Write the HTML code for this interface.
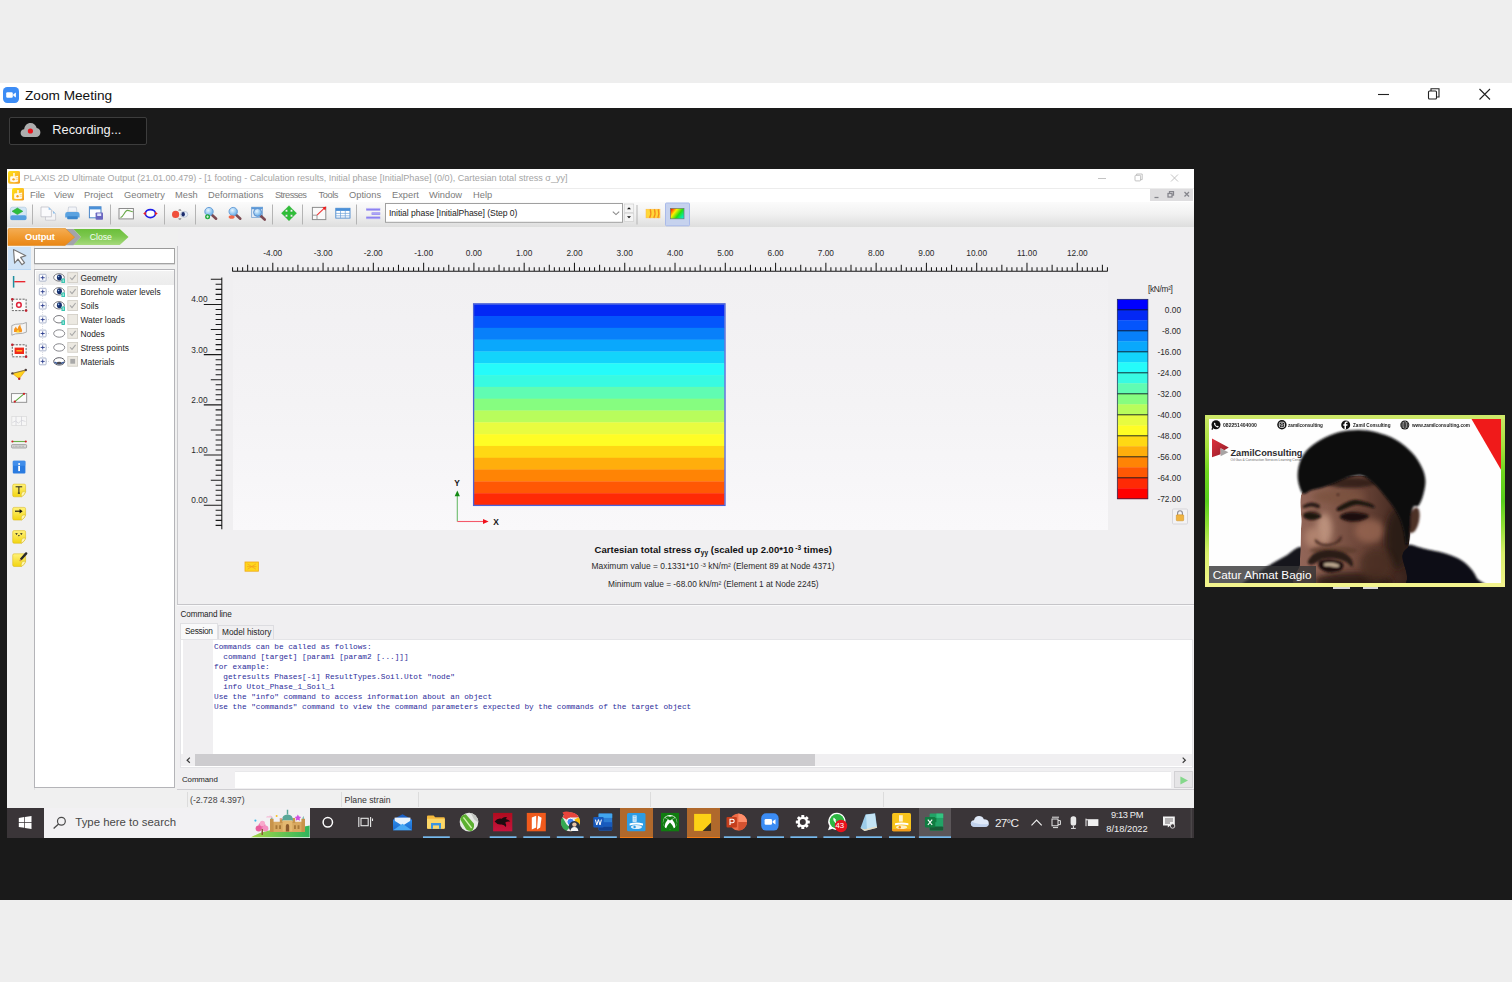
<!DOCTYPE html>
<html lang="en"><head><meta charset="utf-8"><title>Zoom Meeting</title>
<style>
html,body{margin:0;padding:0}
body{width:1512px;height:982px;background:#eeeeee;position:relative;overflow:hidden;font-family:"Liberation Sans",sans-serif;color:#000}
.a,.a *{position:absolute}
.a{position:absolute}
div,span,svg{box-sizing:border-box}
.t{white-space:nowrap;line-height:1}
#ztitle{left:0;top:83px;width:1512px;height:25.400px;background:#fff}
#dark{left:0;top:108.300px;width:1512px;height:791.700px;background:#1a1a1a}
#rec{left:9px;top:117px;width:138px;height:28px;background:#111;border:1px solid #3d3d3d;border-radius:2px}
#share{left:0;top:0;width:1512px;height:982px;clip-path:inset(169px 318px 144px 7px)}
#sharebg{left:7px;top:169px;width:1187px;height:669px;background:#f0f0f0}
.rl{font-size:8.300px;color:#2a2a2a}
</style></head><body>
<!-- Zoom window chrome -->
<div class="a" id="ztitle"></div>
<svg class="a" style="left:3px;top:87px" width="16" height="16" viewBox="0 0 16 16"><rect x="0" y="0" width="16" height="16" rx="4.2" fill="#3c8cf5"/><rect x="3.2" y="5.3" width="6.6" height="5.4" rx="1.2" fill="#fff"/><path d="M10.3 7.3 L12.9 5.6 V10.4 L10.3 8.7Z" fill="#fff"/></svg>
<div class="a t" style="left:25px;top:89.400px;font-size:13.650px;color:#111">Zoom Meeting</div>
<svg class="a" style="left:1370px;top:84px" width="130" height="22" viewBox="0 0 130 22" fill="none" stroke="#222" stroke-width="1.1"><path d="M8 10.5 H19"/><rect x="58.5" y="7" width="8" height="8" rx="1"/><path d="M61 7 V4.8 H69 V13 H66.5"/><path d="M109.5 5 L120 15.5 M120 5 L109.5 15.5"/></svg>
<div class="a" id="dark"></div>
<div class="a" id="rec"></div>
<svg class="a" style="left:20px;top:122px" width="21" height="16" viewBox="0 0 21 16"><path d="M5 15 C2 15 .6 13 .6 11 C.6 8.8 2.3 7.4 4.2 7.3 C4.4 3.6 7.2 1 10.5 1 C13.6 1 16 3 16.7 6 C19 6.3 20.4 8.2 20.4 10.4 C20.4 13 18.5 15 16 15Z" fill="#adadad"/><circle cx="10.4" cy="9" r="2.6" fill="#e8141c"/></svg>
<div class="a t" style="left:52.300px;top:123.900px;font-size:12.800px;color:#f2f2f2">Recording...</div>
<div class="a" id="share">
<div class="a" id="sharebg"></div>
<!-- PLAXIS title bar -->
<div class="a" style="left:7px;top:169px;width:1187px;height:18.5px;background:#fff"></div>
<svg class="a" style="left:7.900px;top:171.400px" width="12.300" height="12.700" preserveAspectRatio="none" viewBox="0 0 12 12"><defs><linearGradient id="pg" x1="0" y1="0" x2="1" y2="1"><stop offset="0" stop-color="#ffe414"/><stop offset=".55" stop-color="#fbbd24"/><stop offset="1" stop-color="#f39a1c"/></linearGradient></defs><rect width="12" height="12" rx="1.8" fill="url(#pg)"/><path d="M5.100 1.800h1.500v3.300l3.300-.700v5.600q-3.900 1.200-7.800 0v-3.700q0-1.300 1.300-1.300h1.700z" fill="#fff" opacity=".92"/><circle cx="5.400" cy="7.900" r="1.150" fill="#f6a21c"/><path d="M7.400 6.300h2.400M7.400 7.900h2.400" stroke="#f8b838" stroke-width=".5"/></svg>
<div class="a t" style="left:23.5px;top:174.100px;font-size:9.070px;color:#a4a4a4">PLAXIS 2D Ultimate Output (21.01.00.479) - [1 footing - Calculation results, Initial phase [InitialPhase] (0/0), Cartesian total stress σ_yy]</div>
<svg class="a" style="left:1090px;top:170px" width="100" height="16" viewBox="0 0 100 16" fill="none" stroke="#b4b4b4" stroke-width="0.8"><path d="M8 8.5h8"/><rect x="45" y="5.3" width="5.6" height="5.6" rx=".8"/><path d="M46.6 5.3V4h5.6v5.6h-1.6"/><path d="M81 4.5l7 7m0-7l-7 7"/></svg>
<!-- menu bar -->
<div class="a" style="left:7px;top:187.5px;width:1187px;height:14.5px;background:#fff;border-top:1px solid #ececec"></div>
<svg class="a" style="left:12px;top:188.100px" width="12.300" height="12.500" preserveAspectRatio="none" viewBox="0 0 12 12"><rect width="12" height="12" rx="1.8" fill="url(#pg)"/><path d="M5.100 1.800h1.500v3.300l3.300-.700v5.600q-3.900 1.200-7.800 0v-3.700q0-1.300 1.300-1.300h1.700z" fill="#fff" opacity=".92"/><circle cx="5.400" cy="7.900" r="1.150" fill="#f6a21c"/><path d="M7.400 6.300h2.400M7.400 7.900h2.400" stroke="#f8b838" stroke-width=".5"/></svg>
<div class="a t" id="menu" style="left:0;top:190.700px;font-size:9.300px;color:#7b7b7b">
<span style="left:30px">File</span><span style="left:54px">View</span><span style="left:84px">Project</span><span style="left:124px">Geometry</span><span style="left:175px">Mesh</span><span style="left:208px">Deformations</span><span style="left:275px;letter-spacing:-.6px">Stresses</span><span style="left:318.400px;letter-spacing:-.4px">Tools</span><span style="left:349px">Options</span><span style="left:392px">Expert</span><span style="left:429px">Window</span><span style="left:473px">Help</span></div>
<div class="a" style="left:1150.300px;top:188.500px;width:43px;height:12.600px;background:#dedddf"></div>
<svg class="a" style="left:1148px;top:188px" width="45" height="13" viewBox="0 0 45 13" fill="none" stroke="#85858c" stroke-width="1.250"><path d="M6.500 9.500h4"/><rect x="20" y="5.5" width="4" height="3.5"/><path d="M21.5 5.5V3.5h4v3.5h-1.5"/><path d="M36.5 4l4.5 4.5m0-4.5l-4.5 4.5"/></svg>
<!-- toolbar -->
<div class="a" style="left:7px;top:202px;width:1187px;height:25px;background:linear-gradient(#fbfbfb,#f2f2f2 45%,#dedede)"></div>
<!-- toolbar icons -->
<svg class="a" style="left:7px;top:202px" width="700" height="25" viewBox="7 202 700 25">
<defs>
<linearGradient id="bl" x1="0" y1="0" x2="0" y2="1"><stop offset="0" stop-color="#bcdcf4"/><stop offset="1" stop-color="#4c9cdc"/></linearGradient>
<linearGradient id="rb" x1="0" y1="0.2" x2="1" y2="0.8"><stop offset="0" stop-color="#ff1e00"/><stop offset=".3" stop-color="#fff000"/><stop offset=".62" stop-color="#22e010"/><stop offset="1" stop-color="#00f0d0"/></linearGradient>
<radialGradient id="lens" cx=".4" cy=".35" r=".7"><stop offset="0" stop-color="#e8f6ff"/><stop offset="1" stop-color="#5aa6e6"/></radialGradient>
</defs>
<g stroke="#b4b4b4" stroke-width="1"><path d="M32.5 204.5v20M110.5 204.5v20M164.5 204.5v20M195.5 204.5v20M272.5 204.5v20M302.5 204.5v20M356.5 204.5v20M637 205v19.5"/></g>
<!-- open -->
<rect x="10.400" y="207.200" width="16" height="12.800" rx="2" fill="#d4e6f5" stroke="#a9c6de" stroke-width=".6"/>
<rect x="10.400" y="215.300" width="16" height="4.700" rx="1.600" fill="#559fdf"/>
<path d="M17.400 208l5.400 3.300-5.400 3.300-5.400-3.300z" fill="#2cbe3c" stroke="#20a030" stroke-width=".5"/>
<!-- copy -->
<path d="M45.5 211h7.5l2.6 2.6v6.6h-10.1z" fill="#f4f4f6" stroke="#c2c2c8" stroke-width=".7"/>
<path d="M41 207h7.6l2.8 2.8v7h-10.4z" fill="#fafafc" stroke="#b8b8c0" stroke-width=".7"/>
<path d="M48.6 207l2.8 2.8h-2.8z" fill="#8fc2ee"/><path d="M53 211l2.6 2.6H53z" fill="#8fc2ee"/>
<!-- print -->
<path d="M68.6 207h7.6l.8 5h-9.2z" fill="#f2f4f8" stroke="#b8c0cc" stroke-width=".6"/>
<path d="M65.2 214.2q0-2.2 2.2-2.2h10q2.2 0 2.2 2.2v3.200h-14.400z" fill="#5aa2e0"/>
<rect x="67.200" y="216.200" width="10.600" height="3" rx=".8" fill="#3b86cc"/>
<!-- window + save -->
<rect x="89.400" y="206.800" width="11.600" height="11" fill="#fdfdff" stroke="#4a86c8" stroke-width="1"/>
<rect x="89.400" y="206.800" width="11.600" height="2.600" fill="#4a90d8"/>
<rect x="95.600" y="212.400" width="7.400" height="7.400" rx=".8" fill="#6a66c0"/>
<rect x="97.200" y="213.400" width="4" height="2.600" fill="#dfe2fa"/>
<!-- chart -->
<rect x="119" y="208.500" width="14.400" height="10.400" fill="#fcfcfc" stroke="#8c8c8c" stroke-width="1"/>
<path d="M120.500 217.600c3-.4 4-7 7-7.200 2-.1 3 1 5.200 1.200" fill="none" stroke="#6aa84a" stroke-width="1.100"/>
<!-- ellipse -->
<ellipse cx="150.400" cy="213.600" rx="5" ry="4" fill="#fff" stroke="#2020e8" stroke-width="1.700"/>
<path d="M143.200 213.600l2.600-2v4zM157.700 213.600l-2.600-2v4z" fill="#f02020"/>
<!-- ball+eye -->
<circle cx="175.600" cy="214.400" r="3.600" fill="#f0503c"/>
<path d="M178.600 210.200q1.600-.8 2.600 .2M178.600 218.800q1.600 .8 2.600-.2" stroke="#444" stroke-width=".8" fill="none"/>
<ellipse cx="184.200" cy="214.300" rx="3.600" ry="3" fill="#e4ecf8" stroke="#9aa4b8" stroke-width=".5"/>
<ellipse cx="183.200" cy="214.300" rx="1.700" ry="2.300" fill="#1c2c6c"/>
<!-- zoom in -->
<g id="mag"><path d="M211.500 214.500l4.600 4.200" stroke="#7c4a52" stroke-width="2.600" stroke-linecap="round"/><circle cx="209" cy="211.600" r="4.200" fill="url(#lens)" stroke="#6aa0d8" stroke-width="1"/></g>
<circle cx="207.600" cy="216.800" r="2.500" fill="#1ea83a"/><path d="M206.200 216.800h2.800M207.600 215.400v2.800" stroke="#fff" stroke-width=".7"/>
<!-- zoom out -->
<g transform="translate(24.200 0)"><path d="M211.500 214.500l4.600 4.200" stroke="#7c4a52" stroke-width="2.600" stroke-linecap="round"/><circle cx="209" cy="211.600" r="4.200" fill="url(#lens)" stroke="#6aa0d8" stroke-width="1"/></g>
<ellipse cx="231.600" cy="217" rx="3" ry="1.800" fill="#f0684a"/>
<!-- zoom rect -->
<rect x="251.600" y="207.200" width="11" height="10.400" fill="#dfe9f4" stroke="#7aa6d4" stroke-width=".8"/><rect x="251.600" y="207.200" width="11" height="2" fill="#5a98d8"/>
<g transform="translate(48.600 .8)"><path d="M211.500 214.500l4.600 4.200" stroke="#7c4a52" stroke-width="2.600" stroke-linecap="round"/><circle cx="209" cy="211.600" r="4" fill="url(#lens)" stroke="#5a90d0" stroke-width="1"/></g>
<!-- move -->
<path d="M289 205.700l3.600 3.800h-2.300v2.400h2.400v-2.300l3.800 3.600-3.800 3.600v-2.300h-2.400v2.400h2.300l-3.600 3.800-3.600-3.800h2.300v-2.400h-2.400v2.300l-3.800-3.600 3.800-3.600v2.300h2.400v-2.400h-2.300z" fill="#2fc038" stroke="#25a82e" stroke-width=".5" stroke-linejoin="round"/>
<!-- scale -->
<rect x="312.400" y="207.400" width="13.400" height="12.200" fill="#fafafa" stroke="#8e8e8e" stroke-width="1"/>
<path d="M312.400 215.200h4.600v4.400" fill="none" stroke="#8e8e8e" stroke-width=".9"/>
<path d="M317 215.200l7.400-7" stroke="#f03434" stroke-width="1.100"/><path d="M326.200 206.600l-.8 3.800-3-3z" fill="#f01c1c"/>
<!-- table -->
<rect x="335.800" y="208.300" width="14.200" height="9.800" fill="#fff" stroke="#4a88cc" stroke-width=".9"/><rect x="335.800" y="208.300" width="14.200" height="2.600" fill="#4a90d8"/>
<path d="M340.500 210.900v7.200M345.300 210.900v7.200M335.800 213.400h14.200M335.800 215.800h14.200" stroke="#6aa0d8" stroke-width=".7"/>
<!-- lines -->
<g fill="#8c82f0"><rect x="366.200" y="208.400" width="14" height="2.200"/><rect x="371.600" y="212.400" width="8.600" height="2.400"/><rect x="366.200" y="216.600" width="14" height="2.200"/></g>
<path d="M366.200 208.400h14M366.200 218.800h14M371.600 213.600h8.600" stroke="#c6c0fa" stroke-width=".6"/>
<!-- combo -->
<rect x="385.500" y="203.500" width="237" height="18.800" fill="#fff" stroke="#a0a0a0" stroke-width="1"/>
<path d="M612.800 211.600l3.200 3 3.200-3" fill="none" stroke="#8a8a8a" stroke-width="1.100"/>
<rect x="624.300" y="204" width="9.400" height="8.400" fill="#f4f4f4" stroke="#d0d0d0" stroke-width=".7"/><rect x="624.300" y="213.200" width="9.400" height="8.400" fill="#f4f4f4" stroke="#d0d0d0" stroke-width=".7"/>
<path d="M627 209.200l2-2 2 2zM627 216.200l2 2 2-2z" fill="#111"/>
<!-- stripes icon -->
<rect x="646" y="209.200" width="14" height="8.700" fill="#ffd838" stroke="#ffb840" stroke-width=".5"/>
<path d="M650.200 209.200q1.600 4.200-.6 8.700M654.400 209.200q1.600 4.200-.6 8.700M658.200 209.200q1.400 4.200-.4 8.700" stroke="#f48a1c" stroke-width="1.300" fill="none"/>
<!-- selected rainbow -->
<rect x="665.500" y="203" width="24" height="22.800" rx="1" fill="#c6d2ee" stroke="#a9baea" stroke-width="1"/>
<rect x="670.400" y="208.400" width="13.600" height="10.400" fill="url(#rb)" stroke="#6a7a6a" stroke-width=".7"/>
</svg>
<div class="a t" style="left:389px;top:208.800px;font-size:8.600px;letter-spacing:-.055px;color:#222">Initial phase [InitialPhase] (Step 0)</div>
<!-- tabs -->
<svg class="a" style="left:7px;top:228px" width="125" height="19" viewBox="7 228 125 19">
<defs><linearGradient id="og" x1="0" y1="0" x2="0" y2="1"><stop offset="0" stop-color="#f4ad55"/><stop offset=".5" stop-color="#f09a30"/><stop offset="1" stop-color="#e98616"/></linearGradient>
<linearGradient id="gg" x1="0" y1="0" x2="0" y2="1"><stop offset="0" stop-color="#6bbf3a"/><stop offset=".45" stop-color="#7cc74e"/><stop offset="1" stop-color="#a6d97c"/></linearGradient></defs>
<path d="M62 229h11.500l7.500 8.200-7.500 8h-11.500z" fill="#a3a3ab"/>
<path d="M73.500 229h46.300l8.700 8.100-8.700 7.900h-46.300l7.400-7.900z" fill="url(#gg)"/>
<path d="M8 230.200q0-2 2-2h55l9.600 9-9.600 8.300h-57z" fill="url(#og)" stroke="#e08c1e" stroke-width=".6"/>
</svg>
<div class="a t" style="left:25px;top:232.600px;font-size:9.300px;font-weight:bold;color:#fff;letter-spacing:-.1px">Output</div>
<div class="a t" style="left:89.700px;top:233px;font-size:8.700px;color:#f4fff0">Close</div>
<!-- left tool strip -->
<div class="a" style="left:8px;top:247px;width:23px;height:22.500px;background:#cfe3f6;border-bottom:1px solid #b9d6f2"></div>
<svg class="a" style="left:7px;top:246px" width="27" height="325" viewBox="7 246 27 325">
<defs><linearGradient id="yn" x1="0" y1="0" x2="0" y2="1"><stop offset="0" stop-color="#fff27a"/><stop offset="1" stop-color="#f2d410"/></linearGradient></defs>
<path d="M13.500 249.600l12.300 6.100-5.200 1.700 4 5.400-2.700 1.900-3.900-5.500-3.400 3.900z" fill="#fff" stroke="#767676" stroke-width="1.150" stroke-linejoin="round"/>
<path d="M13.600 276v11.600" stroke="#1e8e9e" stroke-width="1.500"/><path d="M14.300 281.700h11" stroke="#e81c24" stroke-width="1.300"/>
<rect x="12.300" y="299.200" width="13.800" height="11.400" fill="#fafafa" stroke="#555" stroke-width=".9" stroke-dasharray="2.200 1.200"/><circle cx="18.900" cy="304.900" r="2.300" fill="none" stroke="#e02038" stroke-width="1.500"/><circle cx="12.300" cy="299.200" r="1.300" fill="#c0202c"/><circle cx="26.100" cy="310.600" r="1.300" fill="#c0202c"/>
<path d="M11.800 325.600q3.600-1.800 7.200-1.600t7.400-1.500v9.600q-3.800 1.700-7.400 1.500t-7.200 1.600z" fill="#f4f4f4" stroke="#9a9a9a" stroke-width=".8"/><path d="M14 332q-.5-3.400 2-5.400 .2 2 1.600 2.400 .4-2.800 2.600-4.400 .3 3 1.600 4.600 .8 1.600-.2 3z" fill="#f6941c"/><path d="M16.400 332.400q.2-2 1.800-3 .6 1.600 1.600 3z" fill="#ffd428"/>
<rect x="12.300" y="344.800" width="13.800" height="12" fill="#fafafa" stroke="#555" stroke-width=".9" stroke-dasharray="2.200 1.200"/><rect x="14.600" y="347.600" width="9.400" height="6.400" fill="#f02818"/><path d="M16.400 350.800h5.800" stroke="#ffb020" stroke-width="1.500"/><circle cx="12.300" cy="344.800" r="1.300" fill="#c0202c"/><circle cx="26.100" cy="356.800" r="1.300" fill="#c0202c"/>
<path d="M12.400 373.400l13.400-3.400-6.600 8.800z" fill="#ffd21c" stroke="#e8a010" stroke-width=".7"/><path d="M12.400 373.400l13.400-3.400" stroke="#555" stroke-width=".7"/><circle cx="12.400" cy="373.400" r="1.200" fill="#4a3a3a"/><circle cx="25.800" cy="370" r="1.200" fill="#4a3a3a"/><circle cx="19.200" cy="378.800" r="1.200" fill="#b82028"/>
<rect x="11.500" y="393.600" width="15.200" height="8.700" fill="#fbfbfb" stroke="#8a8a8a" stroke-width=".9"/><path d="M14.800 401.600l9.200-7.800" stroke="#58a838" stroke-width="1.100"/><circle cx="14.800" cy="401.600" r="1.150" fill="#d02028"/><circle cx="24" cy="393.800" r="1.150" fill="#d02028"/>
<rect x="11.800" y="416.500" width="14.600" height="9" fill="#f6f6f6" stroke="#dcdcdc" stroke-width=".8"/><path d="M12.500 422.500l3-1.500 3 2.200 3-3 4 1.300M16 416.500v9M21.500 416.500v9" stroke="#cfcfd6" stroke-width=".7" fill="none"/>
<path d="M12.200 441.500h13.800" stroke="#68b048" stroke-width="1.100"/><circle cx="12.400" cy="441.500" r="1.100" fill="#d02028"/><circle cx="25.800" cy="441.500" r="1.100" fill="#d02028"/><rect x="11.600" y="444.600" width="15" height="3.400" rx=".8" fill="#d8d8d8" stroke="#8a8a8a" stroke-width=".7"/><path d="M13.500 446.300h11" stroke="#8a8a8a" stroke-width=".8" stroke-dasharray=".6 .8"/>
<rect x="12.800" y="460.800" width="12.600" height="12.600" rx="1" fill="#2a7be0"/><rect x="12.800" y="460.800" width="12.600" height="5" rx="1" fill="#4a96ee" opacity=".7"/><circle cx="19.100" cy="463.900" r="1" fill="#fff"/><rect x="18.200" y="465.900" width="1.800" height="5.200" fill="#fff"/>
<path d="M12.700 485.5q0-1.400 1.400-1.400h10.100q1.400 0 1.400 1.400v6.200q-.600 3-4.200 5.100h-7.300q-1.400 0-1.400-1.400z" fill="url(#yn)" stroke="#d8b410" stroke-width=".5"/><path d="M25.600 491.7q-3-.500-3.800 1t-.400 4.100q3.600-2.100 4.200-5.100z" fill="#fdf6b4" stroke="#cfae18" stroke-width=".4"/>
<path d="M15.600 486.800h6.600M18.900 486.800v6.400M17.800 493.200h2.200" stroke="#222" stroke-width="1"/>
<path d="M12.700 508.8q0-1.400 1.400-1.400h10.100q1.400 0 1.400 1.400v6.200q-.600 3-4.200 5.100h-7.300q-1.400 0-1.400-1.400z" fill="url(#yn)" stroke="#d8b410" stroke-width=".5"/><path d="M25.600 515.0q-3-.500-3.800 1t-.400 4.100q3.600-2.100 4.200-5.100z" fill="#fdf6b4" stroke="#cfae18" stroke-width=".4"/>
<path d="M15 511.200h5" stroke="#111" stroke-width="1.100"/><path d="M19.600 509l3 2.200-3 2.200z" fill="#111"/>
<path d="M12.700 532.0q0-1.400 1.400-1.400h10.100q1.400 0 1.400 1.400v6.200q-.600 3-4.200 5.100h-7.300q-1.400 0-1.400-1.400z" fill="url(#yn)" stroke="#d8b410" stroke-width=".5"/><path d="M25.600 538.2q-3-.500-3.800 1t-.400 4.100q3.600-2.100 4.200-5.100z" fill="#fdf6b4" stroke="#cfae18" stroke-width=".4"/>
<path d="M15.200 533.200h2.600l-1.300 1.800zM20 533.200h2.600l-1.300 1.800zM18 535h1.800l-.9 1.600z" fill="#222"/>
<path d="M12.700 555.2q0-1.400 1.400-1.400h10.100q1.400 0 1.400 1.400v6.200q-.600 3-4.200 5.100h-7.300q-1.400 0-1.400-1.400z" fill="url(#yn)" stroke="#d8b410" stroke-width=".5"/><path d="M25.600 561.4q-3-.500-3.800 1t-.400 4.100q3.600-2.100 4.200-5.100z" fill="#fdf6b4" stroke="#cfae18" stroke-width=".4"/>
<path d="M26.200 553.400l-5 5.600" stroke="#2a2a2a" stroke-width="2.400" stroke-linecap="round"/><path d="M20.800 559.400l-1 1.800" stroke="#d89040" stroke-width="1.400"/>
</svg>
<!-- search box + tree -->
<div class="a" style="left:33.500px;top:246px;width:1px;height:544px;background:#e2e2e4"></div>
<div class="a" style="left:176.800px;top:246px;width:1px;height:544px;background:#c9c9cc"></div>
<div class="a" style="left:34.200px;top:248.300px;width:141.300px;height:16px;background:#fff;border:1px solid #a3a3a3;border-top-color:#9a9a9a;box-shadow:0 1px 0 #d6d6d6"></div>
<div class="a" style="left:34.200px;top:269.200px;width:141.300px;height:519px;background:#fff;border:1px solid #b4b4b8"></div>
<div class="a" style="left:35.500px;top:270.600px;width:138.700px;height:14px;background:linear-gradient(#f2f2f2,#ececec)"></div>
<!-- tree rows -->
<svg class="a" style="left:35px;top:270px" width="141" height="100" viewBox="35 270 141 100">
<path d="M42.600 284v74" stroke="#c4c8d4" stroke-width=".7" stroke-dasharray="1 1"/>
<path d="M46 277.70h4" stroke="#c4c8d4" stroke-width=".7" stroke-dasharray="1 1"/>
<rect x="39.300" y="274.30" width="6.800" height="6.800" rx=".8" fill="#fdfdff" stroke="#98a4c0" stroke-width=".8"/>
<path d="M40.700 277.70h4M42.700 275.70v4" stroke="#2a3c8c" stroke-width=".9"/>
<ellipse cx="59" cy="277.40" rx="5.300" ry="3.700" fill="#fff" stroke="#6c6c72" stroke-width=".9"/>
<ellipse cx="59.400" cy="277.40" rx="2.500" ry="3" fill="#16306e"/><circle cx="58.600" cy="276.50" r=".8" fill="#9cc4f0"/>
<rect x="61.400" y="278.50" width="3.600" height="4.600" rx=".6" fill="#38c4b0"/><path d="M63.200 279.50v2.600" stroke="#e8fffa" stroke-width=".8"/>
<rect x="67.800" y="272.70" width="9.800" height="9.800" fill="#ece9e2" stroke="#cfcbc2" stroke-width=".8"/>
<path d="M70 277.50l2 2.200 3.600-4.600" fill="none" stroke="#a8a8a8" stroke-width="1.100"/>
<path d="M46 291.65h4" stroke="#c4c8d4" stroke-width=".7" stroke-dasharray="1 1"/>
<rect x="39.300" y="288.25" width="6.800" height="6.800" rx=".8" fill="#fdfdff" stroke="#98a4c0" stroke-width=".8"/>
<path d="M40.700 291.65h4M42.700 289.65v4" stroke="#2a3c8c" stroke-width=".9"/>
<ellipse cx="59" cy="291.35" rx="5.300" ry="3.700" fill="#fff" stroke="#6c6c72" stroke-width=".9"/>
<ellipse cx="59.400" cy="291.35" rx="2.500" ry="3" fill="#16306e"/><circle cx="58.600" cy="290.45" r=".8" fill="#9cc4f0"/>
<rect x="61.400" y="292.45" width="3.600" height="4.600" rx=".6" fill="#38c4b0"/><path d="M63.200 293.45v2.600" stroke="#e8fffa" stroke-width=".8"/>
<rect x="67.800" y="286.65" width="9.800" height="9.800" fill="#ece9e2" stroke="#cfcbc2" stroke-width=".8"/>
<path d="M70 291.45l2 2.200 3.600-4.600" fill="none" stroke="#a8a8a8" stroke-width="1.100"/>
<path d="M46 305.60h4" stroke="#c4c8d4" stroke-width=".7" stroke-dasharray="1 1"/>
<rect x="39.300" y="302.20" width="6.800" height="6.800" rx=".8" fill="#fdfdff" stroke="#98a4c0" stroke-width=".8"/>
<path d="M40.700 305.60h4M42.700 303.60v4" stroke="#2a3c8c" stroke-width=".9"/>
<ellipse cx="59" cy="305.30" rx="5.300" ry="3.700" fill="#fff" stroke="#6c6c72" stroke-width=".9"/>
<ellipse cx="59.400" cy="305.30" rx="2.500" ry="3" fill="#16306e"/><circle cx="58.600" cy="304.40" r=".8" fill="#9cc4f0"/>
<rect x="61.400" y="306.40" width="3.600" height="4.600" rx=".6" fill="#38c4b0"/><path d="M63.200 307.40v2.600" stroke="#e8fffa" stroke-width=".8"/>
<rect x="67.800" y="300.60" width="9.800" height="9.800" fill="#ece9e2" stroke="#cfcbc2" stroke-width=".8"/>
<path d="M70 305.40l2 2.200 3.600-4.600" fill="none" stroke="#a8a8a8" stroke-width="1.100"/>
<path d="M46 319.55h4" stroke="#c4c8d4" stroke-width=".7" stroke-dasharray="1 1"/>
<rect x="39.300" y="316.15" width="6.800" height="6.800" rx=".8" fill="#fdfdff" stroke="#98a4c0" stroke-width=".8"/>
<path d="M40.700 319.55h4M42.700 317.55v4" stroke="#2a3c8c" stroke-width=".9"/>
<ellipse cx="59" cy="319.25" rx="5.300" ry="3.700" fill="#fff" stroke="#6c6c72" stroke-width=".9"/>
<rect x="61.400" y="320.35" width="3.600" height="4.600" rx=".6" fill="#38c4b0"/><path d="M63.200 321.35v2.600" stroke="#e8fffa" stroke-width=".8"/>
<rect x="67.800" y="314.55" width="9.800" height="9.800" fill="#ece9e2" stroke="#cfcbc2" stroke-width=".8"/>
<path d="M46 333.50h4" stroke="#c4c8d4" stroke-width=".7" stroke-dasharray="1 1"/>
<rect x="39.300" y="330.10" width="6.800" height="6.800" rx=".8" fill="#fdfdff" stroke="#98a4c0" stroke-width=".8"/>
<path d="M40.700 333.50h4M42.700 331.50v4" stroke="#2a3c8c" stroke-width=".9"/>
<ellipse cx="59.200" cy="333.50" rx="5.500" ry="3.700" fill="#fff" stroke="#7a7a80" stroke-width=".9"/>
<rect x="67.800" y="328.50" width="9.800" height="9.800" fill="#ece9e2" stroke="#cfcbc2" stroke-width=".8"/>
<path d="M70 333.30l2 2.200 3.600-4.600" fill="none" stroke="#a8a8a8" stroke-width="1.100"/>
<path d="M46 347.45h4" stroke="#c4c8d4" stroke-width=".7" stroke-dasharray="1 1"/>
<rect x="39.300" y="344.05" width="6.800" height="6.800" rx=".8" fill="#fdfdff" stroke="#98a4c0" stroke-width=".8"/>
<path d="M40.700 347.45h4M42.700 345.45v4" stroke="#2a3c8c" stroke-width=".9"/>
<ellipse cx="59.200" cy="347.45" rx="5.500" ry="3.700" fill="#fff" stroke="#7a7a80" stroke-width=".9"/>
<rect x="67.800" y="342.45" width="9.800" height="9.800" fill="#ece9e2" stroke="#cfcbc2" stroke-width=".8"/>
<path d="M70 347.25l2 2.200 3.600-4.600" fill="none" stroke="#a8a8a8" stroke-width="1.100"/>
<path d="M46 361.40h4" stroke="#c4c8d4" stroke-width=".7" stroke-dasharray="1 1"/>
<rect x="39.300" y="358.00" width="6.800" height="6.800" rx=".8" fill="#fdfdff" stroke="#98a4c0" stroke-width=".8"/>
<path d="M40.700 361.40h4M42.700 359.40v4" stroke="#2a3c8c" stroke-width=".9"/>
<ellipse cx="59.200" cy="361.40" rx="5.500" ry="3.700" fill="#fff" stroke="#5c5c64" stroke-width="1"/><path d="M54.400 362.20q4.800 3 9.600 0" stroke="#3c5c9c" stroke-width="1.400" fill="none"/><ellipse cx="59.200" cy="363.00" rx="2.400" ry="1.200" fill="#4a4a52"/>
<rect x="67.800" y="356.40" width="9.800" height="9.800" fill="#ece9e2" stroke="#cfcbc2" stroke-width=".8"/>
<rect x="70.300" y="358.90" width="4.800" height="4.800" fill="#a9a9a9"/>
</svg>
<div class="a t" style="left:80.500px;top:274.20px;font-size:8.400px;color:#1c1c1c">Geometry</div>
<div class="a t" style="left:80.500px;top:288.15px;font-size:8.400px;color:#1c1c1c">Borehole water levels</div>
<div class="a t" style="left:80.500px;top:302.10px;font-size:8.400px;color:#1c1c1c">Soils</div>
<div class="a t" style="left:80.500px;top:316.05px;font-size:8.400px;color:#1c1c1c">Water loads</div>
<div class="a t" style="left:80.500px;top:330.00px;font-size:8.400px;color:#1c1c1c">Nodes</div>
<div class="a t" style="left:80.500px;top:343.95px;font-size:8.400px;color:#1c1c1c">Stress points</div>
<div class="a t" style="left:80.500px;top:357.90px;font-size:8.400px;color:#1c1c1c">Materials</div>
<!-- plot area -->
<div class="a" style="left:178px;top:228px;width:1016px;height:376px;background:#f0eff1"></div>
<div class="a" style="left:232.500px;top:277.500px;width:875px;height:252px;background:linear-gradient(#f1f0f2,#f4f3f5 50%,#f9f8fa)"></div>
<svg class="a" style="left:178px;top:228px" width="1016" height="376" viewBox="178 228 1016 376">
<path d="M232.300 271.2H1107.600M232.56 271.2v-4M237.58 271.2v-4M242.61 271.2v-4M247.64 271.2v-6.4M252.67 271.2v-4M257.70 271.2v-4M262.72 271.2v-4M267.75 271.2v-4M272.78 271.2v-8.4M277.81 271.2v-4M282.84 271.2v-4M287.86 271.2v-4M292.89 271.2v-4M297.92 271.2v-6.4M302.95 271.2v-4M307.98 271.2v-4M313.00 271.2v-4M318.03 271.2v-4M323.06 271.2v-8.4M328.09 271.2v-4M333.12 271.2v-4M338.14 271.2v-4M343.17 271.2v-4M348.20 271.2v-6.4M353.23 271.2v-4M358.26 271.2v-4M363.28 271.2v-4M368.31 271.2v-4M373.34 271.2v-8.4M378.37 271.2v-4M383.40 271.2v-4M388.42 271.2v-4M393.45 271.2v-4M398.48 271.2v-6.4M403.51 271.2v-4M408.54 271.2v-4M413.56 271.2v-4M418.59 271.2v-4M423.62 271.2v-8.4M428.65 271.2v-4M433.68 271.2v-4M438.70 271.2v-4M443.73 271.2v-4M448.76 271.2v-6.4M453.79 271.2v-4M458.82 271.2v-4M463.84 271.2v-4M468.87 271.2v-4M473.90 271.2v-8.4M478.93 271.2v-4M483.96 271.2v-4M488.98 271.2v-4M494.01 271.2v-4M499.04 271.2v-6.4M504.07 271.2v-4M509.10 271.2v-4M514.12 271.2v-4M519.15 271.2v-4M524.18 271.2v-8.4M529.21 271.2v-4M534.24 271.2v-4M539.26 271.2v-4M544.29 271.2v-4M549.32 271.2v-6.4M554.35 271.2v-4M559.38 271.2v-4M564.40 271.2v-4M569.43 271.2v-4M574.46 271.2v-8.4M579.49 271.2v-4M584.52 271.2v-4M589.54 271.2v-4M594.57 271.2v-4M599.60 271.2v-6.4M604.63 271.2v-4M609.66 271.2v-4M614.68 271.2v-4M619.71 271.2v-4M624.74 271.2v-8.4M629.77 271.2v-4M634.80 271.2v-4M639.82 271.2v-4M644.85 271.2v-4M649.88 271.2v-6.4M654.91 271.2v-4M659.94 271.2v-4M664.96 271.2v-4M669.99 271.2v-4M675.02 271.2v-8.4M680.05 271.2v-4M685.08 271.2v-4M690.10 271.2v-4M695.13 271.2v-4M700.16 271.2v-6.4M705.19 271.2v-4M710.22 271.2v-4M715.24 271.2v-4M720.27 271.2v-4M725.30 271.2v-8.4M730.33 271.2v-4M735.36 271.2v-4M740.38 271.2v-4M745.41 271.2v-4M750.44 271.2v-6.4M755.47 271.2v-4M760.50 271.2v-4M765.52 271.2v-4M770.55 271.2v-4M775.58 271.2v-8.4M780.61 271.2v-4M785.64 271.2v-4M790.66 271.2v-4M795.69 271.2v-4M800.72 271.2v-6.4M805.75 271.2v-4M810.78 271.2v-4M815.80 271.2v-4M820.83 271.2v-4M825.86 271.2v-8.4M830.89 271.2v-4M835.92 271.2v-4M840.94 271.2v-4M845.97 271.2v-4M851.00 271.2v-6.4M856.03 271.2v-4M861.06 271.2v-4M866.08 271.2v-4M871.11 271.2v-4M876.14 271.2v-8.4M881.17 271.2v-4M886.20 271.2v-4M891.22 271.2v-4M896.25 271.2v-4M901.28 271.2v-6.4M906.31 271.2v-4M911.34 271.2v-4M916.36 271.2v-4M921.39 271.2v-4M926.42 271.2v-8.4M931.45 271.2v-4M936.48 271.2v-4M941.50 271.2v-4M946.53 271.2v-4M951.56 271.2v-6.4M956.59 271.2v-4M961.62 271.2v-4M966.64 271.2v-4M971.67 271.2v-4M976.70 271.2v-8.4M981.73 271.2v-4M986.76 271.2v-4M991.78 271.2v-4M996.81 271.2v-4M1001.84 271.2v-6.4M1006.87 271.2v-4M1011.90 271.2v-4M1016.92 271.2v-4M1021.95 271.2v-4M1026.98 271.2v-8.4M1032.01 271.2v-4M1037.04 271.2v-4M1042.06 271.2v-4M1047.09 271.2v-4M1052.12 271.2v-6.4M1057.15 271.2v-4M1062.18 271.2v-4M1067.20 271.2v-4M1072.23 271.2v-4M1077.26 271.2v-8.4M1082.29 271.2v-4M1087.32 271.2v-4M1092.34 271.2v-4M1097.37 271.2v-4M1102.40 271.2v-6.4M1107.43 271.2v-4" stroke="#1a1a1a" stroke-width="1.050" fill="none"/>
<path d="M221.8 277.500V529.200M221.8 525.39h-6.2M221.8 520.37h-6.2M221.8 515.34h-6.2M221.8 510.32h-6.2M221.8 505.30h-18M221.8 500.28h-6.2M221.8 495.26h-6.2M221.8 490.23h-6.2M221.8 485.21h-6.2M221.8 480.19h-11M221.8 475.17h-6.2M221.8 470.15h-6.2M221.8 465.12h-6.2M221.8 460.10h-6.2M221.8 455.08h-18M221.8 450.06h-6.2M221.8 445.04h-6.2M221.8 440.01h-6.2M221.8 434.99h-6.2M221.8 429.97h-11M221.8 424.95h-6.2M221.8 419.93h-6.2M221.8 414.90h-6.2M221.8 409.88h-6.2M221.8 404.86h-18M221.8 399.84h-6.2M221.8 394.82h-6.2M221.8 389.79h-6.2M221.8 384.77h-6.2M221.8 379.75h-11M221.8 374.73h-6.2M221.8 369.71h-6.2M221.8 364.68h-6.2M221.8 359.66h-6.2M221.8 354.64h-18M221.8 349.62h-6.2M221.8 344.60h-6.2M221.8 339.57h-6.2M221.8 334.55h-6.2M221.8 329.53h-11M221.8 324.51h-6.2M221.8 319.49h-6.2M221.8 314.46h-6.2M221.8 309.44h-6.2M221.8 304.42h-18M221.8 299.40h-6.2M221.8 294.38h-6.2M221.8 289.35h-6.2M221.8 284.33h-6.2M221.8 279.31h-11" stroke="#1a1a1a" stroke-width="1.050" fill="none"/>
<rect x="474.0" y="304.20" width="250.6" height="12.11" fill="#0328f5"/>
<rect x="474.0" y="316.01" width="250.6" height="12.11" fill="#0455fc"/>
<rect x="474.0" y="327.82" width="250.6" height="12.11" fill="#0880fa"/>
<rect x="474.0" y="339.64" width="250.6" height="12.11" fill="#0aa8fc"/>
<rect x="474.0" y="351.45" width="250.6" height="12.11" fill="#13d4fb"/>
<rect x="474.0" y="363.26" width="250.6" height="12.11" fill="#25fbfa"/>
<rect x="474.0" y="375.07" width="250.6" height="12.11" fill="#38fae2"/>
<rect x="474.0" y="386.88" width="250.6" height="12.11" fill="#60fcb2"/>
<rect x="474.0" y="398.69" width="250.6" height="12.11" fill="#86fd80"/>
<rect x="474.0" y="410.51" width="250.6" height="12.11" fill="#b8fd5c"/>
<rect x="474.0" y="422.32" width="250.6" height="12.11" fill="#e8fc40"/>
<rect x="474.0" y="434.13" width="250.6" height="12.11" fill="#fffd25"/>
<rect x="474.0" y="445.94" width="250.6" height="12.11" fill="#ffd814"/>
<rect x="474.0" y="457.75" width="250.6" height="12.11" fill="#ffae0c"/>
<rect x="474.0" y="469.56" width="250.6" height="12.11" fill="#ff8405"/>
<rect x="474.0" y="481.38" width="250.6" height="12.11" fill="#ff5804"/>
<rect x="474.0" y="493.19" width="250.6" height="12.11" fill="#ff2a05"/>
<rect x="473.6" y="303.8" width="251.4" height="201.6" fill="none" stroke="#4a62d8" stroke-width="1.300"/>
<path d="M457.300 521.500V495" stroke="#6cbc6c" stroke-width="1.100"/><path d="M457.300 490.600l2.600 5.600h-5.200z" fill="#138a13"/>
<path d="M457.300 521.500H484" stroke="#f4586a" stroke-width="1.100"/><path d="M488.600 521.500l-5.600 2.600v-5.200z" fill="#f0101c"/>
<rect x="1117.3" y="299.30" width="30.6" height="10.80" fill="#0000ff"/>
<rect x="1117.3" y="309.80" width="30.6" height="10.80" fill="#0328f5"/>
<rect x="1117.3" y="320.30" width="30.6" height="10.80" fill="#0455fc"/>
<rect x="1117.3" y="330.80" width="30.6" height="10.80" fill="#0880fa"/>
<rect x="1117.3" y="341.30" width="30.6" height="10.80" fill="#0aa8fc"/>
<rect x="1117.3" y="351.80" width="30.6" height="10.80" fill="#13d4fb"/>
<rect x="1117.3" y="362.30" width="30.6" height="10.80" fill="#25fbfa"/>
<rect x="1117.3" y="372.80" width="30.6" height="10.80" fill="#38fae2"/>
<rect x="1117.3" y="383.30" width="30.6" height="10.80" fill="#60fcb2"/>
<rect x="1117.3" y="393.80" width="30.6" height="10.80" fill="#86fd80"/>
<rect x="1117.3" y="404.30" width="30.6" height="10.80" fill="#b8fd5c"/>
<rect x="1117.3" y="414.80" width="30.6" height="10.80" fill="#e8fc40"/>
<rect x="1117.3" y="425.30" width="30.6" height="10.80" fill="#fffd25"/>
<rect x="1117.3" y="435.80" width="30.6" height="10.80" fill="#ffd814"/>
<rect x="1117.3" y="446.30" width="30.6" height="10.80" fill="#ffae0c"/>
<rect x="1117.3" y="456.80" width="30.6" height="10.80" fill="#ff8405"/>
<rect x="1117.3" y="467.30" width="30.6" height="10.80" fill="#ff5804"/>
<rect x="1117.3" y="477.80" width="30.6" height="10.80" fill="#ff2a05"/>
<rect x="1117.3" y="488.30" width="30.6" height="10.80" fill="#ff0000"/>
<path d="M1117.3 309.80h30.6M1117.3 330.80h30.6M1117.3 351.80h30.6M1117.3 372.80h30.6M1117.3 393.80h30.6M1117.3 414.80h30.6M1117.3 435.80h30.6M1117.3 456.80h30.6M1117.3 477.80h30.6" stroke="#101820" stroke-width=".900"/>
<rect x="1117.3" y="299.3" width="30.6" height="199.5" fill="none" stroke="#1a2450" stroke-width=".700"/>
<rect x="1172.500" y="509" width="15" height="15" rx="1" fill="#f3f2f4" stroke="#cfcfd4" stroke-width=".800"/>
<path d="M1177.600 515v-1.800q0-2.400 2.400-2.400t2.400 2.400v1.800" fill="none" stroke="#8a8a92" stroke-width="1.100"/><rect x="1176.300" y="514.800" width="7.400" height="6" rx=".8" fill="#f0b440" stroke="#c88a20" stroke-width=".500"/>
<rect x="245" y="562" width="13.400" height="9.200" fill="#ffd61c" stroke="#f0a818" stroke-width=".800"/><path d="M247.500 564l8.400 5.200M255.900 564l-8.400 5.200M247 566.600h9.400" stroke="#f4a020" stroke-width=".700"/>
</svg>
<div class="a t rl" style="left:252.8px;top:249.300px;width:40px;text-align:center">-4.00</div>
<div class="a t rl" style="left:303.1px;top:249.300px;width:40px;text-align:center">-3.00</div>
<div class="a t rl" style="left:353.3px;top:249.300px;width:40px;text-align:center">-2.00</div>
<div class="a t rl" style="left:403.6px;top:249.300px;width:40px;text-align:center">-1.00</div>
<div class="a t rl" style="left:453.9px;top:249.300px;width:40px;text-align:center">0.00</div>
<div class="a t rl" style="left:504.2px;top:249.300px;width:40px;text-align:center">1.00</div>
<div class="a t rl" style="left:554.5px;top:249.300px;width:40px;text-align:center">2.00</div>
<div class="a t rl" style="left:604.7px;top:249.300px;width:40px;text-align:center">3.00</div>
<div class="a t rl" style="left:655.0px;top:249.300px;width:40px;text-align:center">4.00</div>
<div class="a t rl" style="left:705.3px;top:249.300px;width:40px;text-align:center">5.00</div>
<div class="a t rl" style="left:755.6px;top:249.300px;width:40px;text-align:center">6.00</div>
<div class="a t rl" style="left:805.9px;top:249.300px;width:40px;text-align:center">7.00</div>
<div class="a t rl" style="left:856.1px;top:249.300px;width:40px;text-align:center">8.00</div>
<div class="a t rl" style="left:906.4px;top:249.300px;width:40px;text-align:center">9.00</div>
<div class="a t rl" style="left:956.7px;top:249.300px;width:40px;text-align:center">10.00</div>
<div class="a t rl" style="left:1007.0px;top:249.300px;width:40px;text-align:center">11.00</div>
<div class="a t rl" style="left:1057.3px;top:249.300px;width:40px;text-align:center">12.00</div>
<div class="a t rl" style="left:180px;top:496.2px;width:27.500px;text-align:right">0.00</div>
<div class="a t rl" style="left:180px;top:446.0px;width:27.500px;text-align:right">1.00</div>
<div class="a t rl" style="left:180px;top:395.8px;width:27.500px;text-align:right">2.00</div>
<div class="a t rl" style="left:180px;top:345.5px;width:27.500px;text-align:right">3.00</div>
<div class="a t rl" style="left:180px;top:295.3px;width:27.500px;text-align:right">4.00</div>
<div class="a t rl" style="left:1140.300px;top:284.900px;width:40px;text-align:center;letter-spacing:-.3px">[kN/m²]</div>
<div class="a t rl" style="left:1141px;top:306.1px;width:40px;text-align:right">0.00</div>
<div class="a t rl" style="left:1141px;top:327.1px;width:40px;text-align:right">-8.00</div>
<div class="a t rl" style="left:1141px;top:348.1px;width:40px;text-align:right">-16.00</div>
<div class="a t rl" style="left:1141px;top:369.1px;width:40px;text-align:right">-24.00</div>
<div class="a t rl" style="left:1141px;top:390.1px;width:40px;text-align:right">-32.00</div>
<div class="a t rl" style="left:1141px;top:411.1px;width:40px;text-align:right">-40.00</div>
<div class="a t rl" style="left:1141px;top:432.1px;width:40px;text-align:right">-48.00</div>
<div class="a t rl" style="left:1141px;top:453.1px;width:40px;text-align:right">-56.00</div>
<div class="a t rl" style="left:1141px;top:474.1px;width:40px;text-align:right">-64.00</div>
<div class="a t rl" style="left:1141px;top:495.1px;width:40px;text-align:right">-72.00</div>
<div class="a t" style="left:454.300px;top:479.300px;font-size:8.400px;font-weight:bold;color:#111">Y</div>
<div class="a t" style="left:493.200px;top:518.200px;font-size:8.400px;font-weight:bold;color:#111">X</div>
<div class="a t" style="left:513.300px;top:544.600px;width:400px;text-align:center;font-size:9.500px;letter-spacing:.02px;font-weight:bold;color:#111">Cartesian total stress σ<span style="position:relative;font-size:6.500px;top:2.500px">yy</span> (scaled up 2.00*10<span style="position:relative;font-size:6.500px;top:-3px"> -3</span> times)</div>
<div class="a t rl" style="left:513px;top:562.100px;width:400px;text-align:center;font-size:8.450px">Maximum value = 0.1331*10<span style="position:relative;font-size:6.200px;top:-2.600px"> -3</span> kN/m² (Element 89 at Node 4371)</div>
<div class="a t rl" style="left:513.300px;top:579.900px;width:400px;text-align:center">Minimum value = -68.00 kN/m² (Element 1 at Node 2245)</div>
<!-- command line panel -->
<div class="a" style="left:177.400px;top:604.200px;width:1017px;height:1.200px;background:#c6c5c9"></div>
<div class="a" style="left:177.400px;top:605.400px;width:1017px;height:1px;background:#f9f9fa"></div>
<div class="a" style="left:177.400px;top:606.400px;width:1017px;height:184px;background:#f0eff1"></div>
<div class="a t" style="left:180.600px;top:610.500px;font-size:8.200px;letter-spacing:-.15px;color:#1e1e1e">Command line</div>
<div class="a" style="left:180px;top:623.400px;width:37.700px;height:16px;background:#f9f9fa;border:1px solid #e0e0e3;border-bottom:none"></div>
<div class="a" style="left:217.700px;top:624.800px;width:56px;height:14px;background:#f0eff1;border:1px solid #dcdce0;border-bottom:none"></div>
<div class="a t" style="left:185px;top:626.700px;font-size:8.300px;letter-spacing:-.26px;color:#1e1e1e">Session</div>
<div class="a t" style="left:222px;top:627.800px;font-size:8.300px;color:#1e1e1e">Model history</div>
<div class="a" style="left:180px;top:638.700px;width:1012.500px;height:129.500px;background:#fff;border:1px solid #e4e4e7"></div>
<div class="a" style="left:183px;top:639.700px;width:29.700px;height:114.200px;background:#f0eff1"></div>
<pre class="a" style="left:214.100px;top:641.600px;margin:0;font-family:'Liberation Mono',monospace;font-size:7.730px;line-height:10px;color:#2c2c9a">Commands can be called as follows:
  command [target] [param1 [param2 [...]]]
for example:
  getresults Phases[-1] ResultTypes.Soil.Utot "node"
  info Utot_Phase_1_Soil_1
Use the "info" command to access information about an object
Use the "commands" command to view the command parameters expected by the commands of the target object</pre>
<div class="a" style="left:181px;top:753.900px;width:1010.500px;height:12.300px;background:#f0eff1"></div>
<div class="a" style="left:194.800px;top:753.900px;width:620.500px;height:12.300px;background:#cdcccf"></div>
<svg class="a" style="left:181px;top:753.900px" width="1011" height="12.300" viewBox="0 0 1011 12.300" fill="none" stroke="#3c3c3c" stroke-width="1.200"><path d="M8.700 3.600l-2.700 2.600 2.700 2.600"/><path d="M1001.800 3.600l2.700 2.600-2.700 2.600"/></svg>
<div class="a t" style="left:182px;top:776px;font-size:7.900px;letter-spacing:-.1px;color:#1e1e1e">Command</div>
<div class="a" style="left:234.500px;top:770.800px;width:936.500px;height:17.500px;background:#fff;border-top:1px solid #e8e8ea"></div>
<div class="a" style="left:1174px;top:770.600px;width:19px;height:17.800px;background:#e6e5e7;border:1px solid #d2d1d4"></div>
<svg class="a" style="left:1179.500px;top:775.500px" width="8.500" height="9" viewBox="0 0 8.500 9"><path d="M.4 .4l7.600 4.100-7.600 4.100z" fill="#84d88b"/></svg>
<div class="a" style="left:177.400px;top:789.300px;width:1017px;height:1px;background:#cfced2"></div>
<!-- status bar -->
<div class="a" style="left:7px;top:790.300px;width:1187px;height:17.400px;background:#f0f0f0"></div>
<div class="a" style="left:186.500px;top:792px;width:1px;height:15px;background:#dcdcdc"></div>
<div class="a" style="left:341.300px;top:792px;width:1px;height:15px;background:#dcdcdc"></div>
<div class="a" style="left:418px;top:792px;width:1px;height:15px;background:#dcdcdc"></div>
<div class="a" style="left:650px;top:792px;width:1px;height:15px;background:#dcdcdc"></div>
<div class="a" style="left:882.700px;top:792px;width:1px;height:15px;background:#dcdcdc"></div>
<div class="a t" style="left:190px;top:795.600px;font-size:8.700px;color:#444">(-2.728 4.397)</div>
<div class="a t" style="left:344.600px;top:795.600px;font-size:8.700px;color:#333">Plane strain</div>
<!-- windows taskbar -->
<div class="a" style="left:7px;top:807.700px;width:1187px;height:30.300px;background:#3a3538"></div>
<div class="a" style="left:43.700px;top:808.200px;width:266.100px;height:29.400px;background:#f2f1f3"></div>
<div class="a" style="left:620.100px;top:807.700px;width:32.700px;height:30.300px;background:#b0692c;border-bottom:1.800px solid #f07a14"></div>
<div class="a" style="left:687.200px;top:807.700px;width:32.800px;height:30.300px;background:#b0692c;border-bottom:1.800px solid #f07a14"></div>
<div class="a" style="left:918.900px;top:807.700px;width:32.100px;height:30.300px;background:#5b5659"></div>
<svg class="a" style="left:7px;top:807px" width="1187" height="31" viewBox="7 807 1187 31">
<defs><linearGradient id="hill" x1="0" y1="0" x2="1" y2="0"><stop offset="0" stop-color="#a8d848"/><stop offset="1" stop-color="#2fb45c"/></linearGradient>
<linearGradient id="mailg" x1="0" y1="0" x2="0" y2="1"><stop offset="0" stop-color="#2b8ce8"/><stop offset="1" stop-color="#1c6ad0"/></linearGradient></defs>
<!-- start -->
<path d="M18.800 817.900l5.400-.8v5h-5.400zM24.900 817l6.600-1v6.100h-6.600zM18.800 822.800h5.400v5l-5.400-.8zM24.900 822.800h6.600v6.100l-6.600-1z" fill="#fff"/>
<!-- search icon -->
<circle cx="61.400" cy="821.200" r="3.900" fill="none" stroke="#4a4a4a" stroke-width="1.200"/><path d="M58.600 824l-5 4.600" stroke="#4a4a4a" stroke-width="1.300"/>
<!-- illustration -->
<clipPath id="sbc"><rect x="43.700" y="808.300" width="266.100" height="29.300"/></clipPath><g clip-path="url(#sbc)"><path d="M250.500 837.600q14-8 30-8.500t29.300-3.500v12z" fill="url(#hill)"/>
<g transform="translate(287.500 832.500) scale(1.2) translate(-289 -832)"><path d="M276 823h26v8.600h-26z" fill="#d8a860"/><path d="M274.400 820.600h3v11h-3zM300.600 820.600h3v11h-3zM282.600 820h2.400v4h-2.400zM293 820h2.400v4h-2.400z" fill="#c8944c"/>
<path d="M284.400 822q0-5 4.600-5t4.600 5z" fill="#5aa898"/><path d="M288.400 813h1.200v4h-1.200z" fill="#5aa898"/><path d="M285 822h8v9h-8z" fill="#e4b870"/><path d="M287.600 826.600q0-1.600 1.400-1.600t1.400 1.600v4.600h-2.800z" fill="#8a5a2c"/>
<path d="M279 826h1.600v3h-1.600zM282 826h1.600v3h-1.600zM294.400 826h1.600v3h-1.600zM297.400 826h1.600v3h-1.600z" fill="#a87838"/>
<path d="M275.200 820.600l.7-2.600.7 2.600zM301.400 820.600l.7-2.600.7 2.600z" fill="#5aa898"/></g>
<circle cx="262" cy="826" r="3.600" fill="#f078b0"/><circle cx="258.600" cy="828.400" r="3" fill="#e85c9c"/><circle cx="265.400" cy="828.600" r="3" fill="#f490c0"/><circle cx="262.400" cy="823.400" r="2.600" fill="#f8a8cc"/><path d="M261.500 829h1.500v6h-1.500z" fill="#8a5a34"/>
<path d="M266 817.400q1-1.800 2.800-1.200 1.600-1.400 3 .2 1.400 .2 1.200 1.400z" fill="#f4c4dc"/><path d="M279 819.400q.8-1.400 2.200-.8 1.200-.8 2 .4z" fill="#f4c4dc"/>
<path d="M297.800 814.600l1.200 2 2.200.4-1.600 1.600.4 2.200-2.200-1-2 1 .4-2.200-1.600-1.600 2.200-.4z" fill="#d050e0"/><circle cx="255.400" cy="820.600" r="1.100" fill="#40b8e8"/><circle cx="276.600" cy="816" r="1" fill="#f8c020"/></g>
<!-- cortana / taskview -->
<circle cx="327.800" cy="822.300" r="4.700" fill="none" stroke="#fff" stroke-width="1.500"/>
<g stroke="#e8e8e8" fill="none" stroke-width="1.100"><rect x="361" y="818.300" width="7.200" height="7.400"/><path d="M358.800 817v10M370.600 817v10M372.500 818.400v2.600"/></g>
<!-- mail -->
<path d="M393 819.600l9.500-5.400 9.500 5.400v10.400h-19z" fill="#1a5fc4"/><path d="M394.600 817.600h15.800v9h-15.800z" fill="#e8f2fc"/><path d="M393 819.800l9.500 6 9.500-6v10.400h-19z" fill="url(#mailg)"/><path d="M393 830.200l9.500-6.400 9.500 6.400z" fill="#48a8f4"/>
<!-- folder -->
<path d="M427 816.400q0-1 1-1h5.600l1.600 1.800h8.600q1 0 1 1v9.500q0 1-1 1h-15.800q-1 0-1-1z" fill="#f4b93c"/><path d="M427 818.800h17.800v9q0 1-1 1h-15.800q-1 0-1-1z" fill="#fcd768"/><path d="M431 823h10v5.800h-10z" fill="#3c94e0"/><path d="M433 825.400h6v3.400h-6z" fill="#fcd768"/>
<!-- corel -->
<circle cx="469" cy="822.100" r="9.300" fill="#e6e8e4"/><path d="M469 812.800a9.300 9.300 0 0 1 9.300 9.300q-4-1-5.500-5t-3.800-4.300z" fill="#c4c8c2"/>
<path d="M461.200 816.800q1.600-2.600 4.600-2.600l8.200 9.600q.8 3.800-1.600 7-3.600.6-6.200-1.200l-5.800-9.800q-.2-1.600.8-3z" fill="#5cb030"/><path d="M463.400 817.400l8.200 10.600" stroke="#d4f4b0" stroke-width="1.300" fill="none"/>
<!-- red/black -->
<defs><linearGradient id="rdg" x1="0" y1="0" x2="0" y2="1"><stop offset="0" stop-color="#b00c1e"/><stop offset="1" stop-color="#c6143e"/></linearGradient></defs><rect x="493.100" y="812.900" width="19.200" height="18.400" fill="url(#rdg)"/><path d="M494.600 821.400q3-3.600 7-2.600 2.400-2.400 5.600-1.400l-1.600 1.600q3 .4 4.600 2.600-3.400-.6-5 1.200 1.600 2 .6 4.200-1.400-2.600-4.200-2.600-3.600 1-7-3z" fill="#1c0c10"/>
<!-- pdf orange -->
<rect x="526.800" y="812.900" width="19" height="18.400" fill="#f05a1c"/><path d="M531.800 817.600l4.400-1.800v11.800l-4.400 1.800zM538 815.800l3.600 2-1.400 9.800-3.200 1.800z" fill="#fff"/>
<!-- chrome -->
<circle cx="570.600" cy="821.900" r="9.400" fill="#e8e8e8"/><path d="M570.600 812.500a9.400 9.400 0 0 1 8.140 4.700h-8.140a4.700 4.700 0 0 0-4.070 2.350l-4.070-7.050a9.400 9.400 0 0 1 8.140 0z" fill="#e8453c"/><path d="M562.460 817.200a9.400 9.400 0 0 1 16.280 0h-8.140a4.700 4.700 0 0 0-4.070 2.350z" fill="#e8453c"/><path d="M562.460 817.200l4.070 7.050a4.700 4.700 0 0 0 4.070 2.350l-4.070 4.200a9.400 9.400 0 0 1-4.070-13.600z" fill="#34a853"/><path d="M578.740 817.200a9.400 9.400 0 0 1-8.140 14.100l4.070-7.050a4.700 4.700 0 0 0 0-4.700z" fill="#fbbc05"/><circle cx="570.600" cy="821.900" r="3.700" fill="#4285f4" stroke="#fff" stroke-width="1"/>
<circle cx="574.400" cy="826.600" r="5.600" fill="#2a3444"/><circle cx="574.400" cy="824.600" r="2.200" fill="#e8c4a4"/><path d="M570.400 831q.6-4 4-4t4 4z" fill="#f4f4f4"/>
<!-- word -->
<rect x="598.600" y="813.600" width="13.600" height="17" rx="1" fill="#2b7cd3"/><rect x="598.600" y="813.600" width="13.600" height="4.300" fill="#41a5ee"/><rect x="598.600" y="822.200" width="13.600" height="4.200" fill="#185abd"/><rect x="598.600" y="826.400" width="13.600" height="4.200" rx="1" fill="#103f91"/><rect x="593.300" y="817" width="10.400" height="10.400" rx="1" fill="#185abd"/><path d="M595.400 819.600l1.400 5.400 1.600-5.400 1.600 5.400 1.400-5.400" stroke="#fff" stroke-width="1" fill="none"/>
<!-- plaxis blue -->
<rect x="627" y="812.900" width="18.500" height="18.400" rx="1.500" fill="#2c9ce4"/><path d="M632.600 815.400h4v6.400h-4z" fill="#e8f4fc"/><path d="M633.400 816.400h2.400M633.400 818.200h2.400M633.400 820h2.400" stroke="#2c9ce4" stroke-width=".6"/><path d="M629.600 823.400q6.400-1.600 13.400 0v2q-7-1.600-13.400 0z" fill="#fff"/><ellipse cx="636.400" cy="827" rx="5.600" ry="2" fill="#e0f0fc"/><circle cx="634.600" cy="827" r="1.200" fill="#2c9ce4"/>
<!-- xbox -->
<rect x="661" y="812.900" width="18" height="18.400" fill="#107c10"/><circle cx="670" cy="822.100" r="7.200" fill="#fff"/><path d="M665.200 817.600q4.800 3 4.800 3t4.800-3q-2-2-4.800-.8-2.800-1.200-4.800 .8zM664.400 827.200q.4-4.400 3.400-7.600-2.400-2.400-3.600-1.400-2.400 4.400 .2 9zM675.600 827.200q-.4-4.400-3.400-7.600 2.400-2.400 3.600-1.400 2.400 4.400-.2 9zM666 828.400q1.400-3.800 4-6 2.600 2.200 4 6-4 2.400-8 0z" fill="#107c10"/>
<!-- sticky -->
<rect x="694.100" y="813.900" width="17" height="17" fill="#fcd116"/><path d="M711.100 822.600v8.300h-8.500z" fill="#3a3020"/>
<!-- powerpoint -->
<circle cx="738.400" cy="822" r="8.600" fill="#ed6c47"/><path d="M738.400 813.400a8.600 8.600 0 0 1 8.600 8.600h-8.600z" fill="#ff8f6b"/><path d="M738.400 822h8.600a8.600 8.600 0 0 1-8.600 8.600z" fill="#d35230"/><rect x="726.500" y="817" width="10.400" height="10.400" rx="1" fill="#c43e1c"/><path d="M730 825v-5.800h2.200q2 0 2 1.800t-2 1.800h-2" stroke="#fff" stroke-width="1.100" fill="none"/>
<!-- zoom -->
<rect x="761.200" y="813.200" width="17.400" height="17.400" rx="5" fill="#3b8cf4"/><rect x="764.600" y="819" width="7.400" height="5.800" rx="1.300" fill="#fff"/><path d="M772.600 821.200l2.900-2v5.400l-2.900-2z" fill="#fff"/>
<!-- gear -->
<g transform="translate(802.800 822)"><g fill="#fff"><rect x="-1.500" y="-7" width="3" height="14" rx=".6"/><rect x="-1.500" y="-7" width="3" height="14" rx=".6" transform="rotate(45)"/><rect x="-1.500" y="-7" width="3" height="14" rx=".6" transform="rotate(90)"/><rect x="-1.500" y="-7" width="3" height="14" rx=".6" transform="rotate(135)"/><circle r="5.200"/></g><circle r="3" fill="#3a3538"/></g>
<!-- whatsapp -->
<path d="M837 812.800a8.600 8.600 0 1 1-4.600 15.900l-4.400 1.500 1.500-4.300a8.600 8.600 0 0 1 7.500-13.100z" fill="#fff"/><circle cx="837" cy="821.400" r="7.300" fill="#2cb742"/><path d="M833.800 817.600q-1 1-.2 3 1.600 3.400 5 4.600 1.600 .4 2.600-1l-2-1.400-1 .8q-2-1-2.800-2.800l.8-.9z" fill="#fff"/>
<circle cx="841" cy="826" r="6.200" fill="#e8121c"/>
<!-- notepad -->
<path d="M865.500 814.400l9.600-1.200 2 14.600-12.600 3.200-4-3z" fill="#9ccce8"/><path d="M866 814.800l8.800-1 1.800 13-9.600 2.600z" fill="#c4e4f4"/><path d="M860.500 828l4 3 12.600-3.200-.6-1.400-11.600 2.800z" fill="#e8dcc0"/>
<!-- yellow plaxis -->
<rect x="892.100" y="812.900" width="18.900" height="18.400" rx="1.500" fill="#f8c41c"/><path d="M899 815.200h3.800v6.400h-3.800z" fill="#fff4d0"/><path d="M895 823.200q6.400-1.600 13.400 0v2q-7-1.600-13.400 0z" fill="#fff"/><ellipse cx="901.600" cy="827.200" rx="5.600" ry="2" fill="#fff0c0"/><circle cx="899.800" cy="827.200" r="1.200" fill="#f08c1c"/><path d="M892.100 829h18.900v.8q0 1.500-1.500 1.500h-15.900q-1.500 0-1.500-1.500z" fill="#f49c1c"/>
<!-- excel -->
<rect x="929.600" y="813.600" width="13.600" height="17" rx="1" fill="#21a366"/><rect x="936.400" y="813.600" width="6.800" height="4.300" fill="#33c481"/><rect x="929.600" y="817.900" width="6.800" height="4.300" fill="#107c41"/><rect x="929.600" y="826.400" width="13.600" height="4.200" rx="1" fill="#185c37"/><rect x="924.900" y="817" width="10.400" height="10.400" rx="1" fill="#107c41"/><path d="M927.800 819.600l4.400 5.400M932.200 819.600l-4.400 5.400" stroke="#fff" stroke-width="1.100"/>
<!-- running underlines -->
<g fill="#76b9ed"><rect x="423" y="836.300" width="26.800" height="1.700"/><rect x="489.700" y="836.300" width="26.800" height="1.700"/><rect x="523.300" y="836.300" width="26.800" height="1.700"/><rect x="556.800" y="836.300" width="26.800" height="1.700"/><rect x="590" y="836.300" width="26.800" height="1.700"/><rect x="723.900" y="836.300" width="26.600" height="1.700"/><rect x="757" y="836.300" width="27" height="1.700"/><rect x="790.400" y="836.300" width="26.800" height="1.700"/><rect x="823.400" y="836.300" width="26" height="1.700"/><rect x="856" y="836.300" width="26" height="1.700"/><rect x="889" y="836.300" width="26" height="1.700"/><rect x="918.900" y="836.300" width="32.100" height="1.700"/></g>
<!-- tray -->
<path d="M975 827q-4.200 0-4.200-3.400 0-3 3.200-3.400 1-4.200 5-4.200 3.600 0 4.800 3.200 5 .2 5 4 0 3.800-4.200 3.800z" fill="#dfe9f8"/><path d="M975 827q-4.200 0-4.200-3.400 0-1.400 .8-2.200 6 3.600 17.200 2.600-.4 3-4.200 3z" fill="#b4c8e8" opacity=".7"/>
<path d="M1031.500 825.300l5.100-5.200 5.100 5.200" fill="none" stroke="#f0f0f0" stroke-width="1.100"/>
<g stroke="#e4e4e4" fill="none" stroke-width="1"><rect x="1052" y="819" width="6" height="6.800"/><path d="M1052 817.200h7M1053 827.600h5M1058 820.600h2.400v4h-2.400"/></g>
<rect x="1070.600" y="816.200" width="5.600" height="9.400" rx="2.600" fill="#e8e8e8"/><path d="M1073.400 825.600v2.600M1071 828.400h4.800" stroke="#e8e8e8" stroke-width="1"/>
<rect x="1087.800" y="819.200" width="10.600" height="6.800" fill="#f0f0f0"/><path d="M1086 818.600v7.600M1086 819.800h2" stroke="#f0f0f0" stroke-width="1"/>
<path d="M1163 816.400h11.800v9h-4.600l-2.400 2.200v-2.200h-4.800z" fill="#f4f4f4"/><path d="M1165 819h8M1165 821h8M1165 823h5" stroke="#3a3538" stroke-width=".7"/><circle cx="1172.600" cy="826" r="2.200" fill="#3a3538" stroke="#f4f4f4" stroke-width=".8"/>
<path d="M1191.200 808v30" stroke="#5a5558" stroke-width=".8"/>
</svg>
<div class="a t" style="left:75.300px;top:817px;font-size:11.400px;color:#484848">Type here to search</div>
<div class="a t" style="left:835.600px;top:822.400px;font-size:7.800px;color:#fff;letter-spacing:-.2px">43</div>
<div class="a t" style="left:995px;top:817.800px;font-size:11.800px;color:#ececec;letter-spacing:-.8px">27°C</div>
<div class="a t" style="left:1097px;top:810.800px;width:60px;text-align:center;font-size:9.300px;color:#f0f0f0;letter-spacing:-.35px">9:13 PM</div>
<div class="a t" style="left:1097px;top:825.300px;width:60px;text-align:center;font-size:9.300px;color:#f0f0f0;letter-spacing:0">8/18/2022</div>
</div><!-- /share -->
<!-- participant video thumbnail -->
<div class="a" style="left:1205px;top:415px;width:300px;height:172px;background:linear-gradient(#cbe766,#a6e23c 18%,#6fd61e 33%,#58cf1c 50%,#8fdf34 64%,#d8ef6a 80%,#f3f58c)"></div>
<div class="a" style="left:1205px;top:415px;width:300px;height:4px;background:#cde868"></div>
<div class="a" style="left:1205px;top:582.700px;width:300px;height:4.300px;background:#f3f48e"></div>
<div class="a" style="left:1209px;top:419px;width:292.400px;height:163.700px;background:#fefefe"></div>
<div class="a t" style="left:1230.500px;top:448.900px;font-size:9.200px;font-weight:bold;color:#2c2c2e">ZamilConsulting</div>
<div class="a t" style="left:1230.600px;top:458.900px;font-size:3.300px;color:#6a6a6a">Oil Gas &amp; Construction Services Learning Center</div>
<svg class="a" style="left:1209px;top:419px" width="292.400" height="163.700" viewBox="1209 419 292.400 163.700">
<defs><filter id="bl1" x="-5%" y="-5%" width="110%" height="110%"><feGaussianBlur stdDeviation="0.800"/></filter><filter id="bl2" x="-20%" y="-20%" width="140%" height="140%"><feGaussianBlur stdDeviation="1.600"/></filter><filter id="bl3" x="-40%" y="-40%" width="180%" height="180%"><feGaussianBlur stdDeviation="3.200"/></filter>
<linearGradient id="skin" x1="0" y1="0" x2="1" y2="0"><stop offset="0" stop-color="#94675a"/><stop offset=".3" stop-color="#875d4e"/><stop offset=".55" stop-color="#6f483b"/><stop offset=".8" stop-color="#503228"/><stop offset="1" stop-color="#34201a"/></linearGradient>
<linearGradient id="lg" x1="0" y1="0" x2="1" y2="1"><stop offset="0" stop-color="#e0303c"/><stop offset="1" stop-color="#8c1c28"/></linearGradient>
<clipPath id="fc"><path d="M1303.2 490.2C1308.7 482.8 1322.8 480.9 1333.9 478.8C1345.0 476.6 1358.9 473.3 1369.7 477.1C1380.6 480.9 1392.5 494.0 1399.1 501.6C1405.6 509.2 1407.2 515.6 1408.8 522.8C1410.5 530.0 1409.9 539.3 1408.8 544.8C1407.7 550.2 1403.9 548.2 1402.3 555.3C1400.7 562.5 1416.0 582.5 1399.1 587.9C1382.1 593.4 1317.0 592.0 1300.5 587.9C1284.0 583.9 1300.0 570.6 1300.0 563.5C1300.0 556.4 1300.3 552.4 1300.5 545.6C1300.7 538.8 1300.8 532.0 1301.3 522.8C1301.8 513.5 1297.8 497.5 1303.2 490.2Z"/></clipPath></defs>
<path d="M1471.500 419H1501.400V470.500Z" fill="#f01a1a"/>
<g filter="url(#bl1)">
<path d="M1397.4 548.8C1401.8 541.6 1404.5 544.8 1408.8 544.8C1413.2 544.7 1417.2 547.0 1423.5 548.5C1429.7 550.0 1440.1 551.8 1446.3 553.7C1452.5 555.6 1456.9 557.5 1461.0 559.9C1465.0 562.4 1468.1 565.3 1470.7 568.4C1473.4 571.4 1475.5 574.9 1476.9 578.2C1478.3 581.4 1494.9 586.3 1479.2 587.9C1463.5 589.6 1396.4 594.5 1382.8 587.9C1369.1 581.4 1393.1 556.0 1397.4 548.8Z" fill="#0f0f13"/>
<path d="M1243.5 587.9C1235.6 584.9 1255.3 575.3 1262.2 570.0C1269.1 564.7 1278.7 560.2 1285.0 556.3C1291.3 552.5 1295.9 547.0 1300.0 546.9C1304.1 546.7 1307.9 548.5 1309.4 555.3C1311.0 562.2 1320.4 582.5 1309.4 587.9C1298.4 593.4 1251.3 590.9 1243.5 587.9Z" fill="#15151b"/>
</g>
<g clip-path="url(#fc)">
<path d="M1303.2 490.2C1308.7 482.8 1322.8 480.9 1333.9 478.8C1345.0 476.6 1358.9 473.3 1369.7 477.1C1380.6 480.9 1392.5 494.0 1399.1 501.6C1405.6 509.2 1407.2 515.6 1408.8 522.8C1410.5 530.0 1409.9 539.3 1408.8 544.8C1407.7 550.2 1403.9 548.2 1402.3 555.3C1400.7 562.5 1416.0 582.5 1399.1 587.9C1382.1 593.4 1317.0 592.0 1300.5 587.9C1284.0 583.9 1300.0 570.6 1300.0 563.5C1300.0 556.4 1300.3 552.4 1300.5 545.6C1300.7 538.8 1300.8 532.0 1301.3 522.8C1301.8 513.5 1297.8 497.5 1303.2 490.2Z" fill="url(#skin)"/>
<ellipse cx="1338.8" cy="496.7" rx="26" ry="7" fill="#7c5240" opacity="0.9" filter="url(#bl3)"/>
<ellipse cx="1350.2" cy="482.8" rx="26" ry="5" fill="#2e1c16" opacity="0.85" filter="url(#bl2)"/>
<ellipse cx="1312.7" cy="515.6" rx="9" ry="4.5" fill="#3a221a" opacity="0.75" filter="url(#bl2)"/>
<ellipse cx="1354.2" cy="516.6" rx="14" ry="5.5" fill="#3a221a" opacity="0.75" filter="url(#bl2)"/>
<ellipse cx="1324.1" cy="529.3" rx="8" ry="16" fill="#c49a84" opacity="0.85" filter="url(#bl3)"/>
<ellipse cx="1312.7" cy="537.4" rx="8" ry="10" fill="#b88a74" opacity="0.8" filter="url(#bl3)"/>
<ellipse cx="1369.7" cy="530.9" rx="15" ry="12" fill="#9a6852" opacity="0.8" filter="url(#bl3)"/>
<ellipse cx="1397.4" cy="539.1" rx="12" ry="30" fill="#2c1a14" opacity="0.9" filter="url(#bl3)"/>
<ellipse cx="1353.4" cy="581.4" rx="40" ry="9" fill="#2e1c16" opacity="0.95" filter="url(#bl3)"/>
<ellipse cx="1376.2" cy="565.1" rx="16" ry="16" fill="#4a2e24" opacity="0.8" filter="url(#bl3)"/>
<ellipse cx="1333.9" cy="550.5" rx="24" ry="4" fill="#5a3a2c" opacity="0.7" filter="url(#bl2)"/>
</g>
<g filter="url(#bl1)">
<ellipse cx="1414.0" cy="520.3" rx="5.200" ry="13" fill="#4e3228" transform="rotate(12 1414.0 520.3)"/>
<path d="M1302.9 493.4C1300.8 491.8 1298.7 485.0 1298.0 480.4C1297.4 475.8 1297.5 470.6 1298.8 465.7C1300.2 460.8 1302.5 455.4 1306.2 451.1C1309.8 446.7 1315.4 442.8 1320.8 439.7C1326.3 436.5 1332.5 434.0 1338.8 432.3C1345.0 430.7 1352.1 429.9 1358.3 429.9C1364.6 429.9 1370.0 430.7 1376.2 432.3C1382.5 434.0 1389.8 436.3 1395.8 439.7C1401.8 443.1 1407.7 448.1 1412.1 452.7C1416.4 457.3 1419.6 462.7 1421.9 467.4C1424.1 472.0 1425.2 475.8 1425.4 480.4C1425.7 485.0 1424.3 490.9 1423.2 495.1C1422.0 499.3 1420.2 503.8 1418.6 505.7C1417.0 507.6 1415.0 504.7 1413.7 506.5C1412.4 508.2 1411.4 512.2 1410.8 516.2C1410.2 520.3 1410.9 526.0 1410.1 530.9C1409.4 535.8 1407.5 545.6 1406.4 545.6C1405.3 545.6 1404.8 535.7 1403.6 530.9C1402.4 526.2 1401.0 521.4 1399.1 517.1C1397.1 512.7 1394.4 508.8 1391.7 504.8C1389.0 500.9 1385.9 497.1 1382.8 493.4C1379.6 489.8 1376.5 485.8 1373.0 482.8C1369.5 479.9 1365.4 476.8 1361.6 475.8C1357.8 474.9 1354.2 476.1 1350.2 477.1C1346.1 478.2 1341.5 480.4 1337.1 482.0C1332.8 483.7 1328.4 485.6 1324.1 486.9C1319.8 488.3 1314.6 489.1 1311.1 490.2C1307.5 491.3 1305.1 495.1 1302.9 493.4Z" fill="#0c0c10"/>
<path d="M1303.2 505.8C1304.4 504.9 1308.4 502.7 1311.1 502.6C1313.7 502.4 1317.9 503.9 1319.2 504.8C1320.5 505.8 1320.2 507.8 1318.9 508.1C1317.5 508.4 1313.6 506.5 1311.1 506.5C1308.6 506.5 1305.2 508.2 1303.9 508.1C1302.6 508.0 1302.1 506.7 1303.2 505.8Z" fill="#2a1a14"/>
<path d="M1337.1 508.1C1338.4 506.6 1343.7 503.6 1346.9 502.2C1350.2 500.9 1352.6 499.7 1356.7 499.9C1360.8 500.2 1368.5 502.6 1371.4 503.9C1374.2 505.2 1376.2 507.6 1373.8 507.8C1371.4 507.9 1362.4 504.3 1356.7 504.8C1351.0 505.4 1342.8 510.5 1339.6 511.0C1336.3 511.6 1335.9 509.6 1337.1 508.1Z" fill="#1c120e"/>
<path d="M1303.9 514.0C1305.0 513.1 1309.0 512.6 1311.9 513.0C1314.8 513.4 1321.0 515.2 1321.2 516.2C1321.4 517.3 1315.7 519.2 1313.0 519.5C1310.4 519.8 1306.7 518.8 1305.2 517.9C1303.7 516.9 1302.8 514.8 1303.9 514.0Z" fill="#1e120e"/>
<path d="M1340.1 516.9C1340.1 515.5 1345.4 512.9 1350.2 512.7C1354.9 512.4 1366.4 514.1 1368.4 515.3C1370.5 516.5 1365.4 518.9 1362.4 519.8C1359.4 520.8 1353.9 521.3 1350.2 520.8C1346.5 520.3 1340.1 518.3 1340.1 516.9Z" fill="#1a0e0c"/>
<path d="M1315.1 539.1C1316.1 539.1 1319.4 543.0 1322.5 543.6C1325.6 544.2 1330.8 543.9 1333.9 542.6C1337.0 541.3 1340.2 536.0 1341.2 535.8C1342.2 535.6 1342.4 539.9 1340.1 541.7C1337.8 543.5 1331.2 546.2 1327.4 546.5C1323.5 546.9 1318.8 544.9 1316.8 543.6C1314.7 542.4 1314.2 539.1 1315.1 539.1Z" fill="#4a2c22" opacity=".9"/>
<path d="M1307.8 561.9C1308.1 560.1 1311.1 555.7 1314.3 553.7C1317.6 551.8 1322.7 550.4 1327.4 550.1C1332.0 549.9 1338.1 550.7 1342.0 552.1C1346.0 553.5 1349.2 556.2 1351.0 558.6C1352.8 561.0 1353.6 566.3 1352.6 566.8C1351.7 567.2 1348.4 562.9 1345.3 561.5C1342.2 560.2 1337.8 558.9 1333.9 558.6C1329.9 558.3 1325.2 558.6 1321.7 559.6C1318.1 560.6 1315.0 564.1 1312.7 564.5C1310.4 564.9 1307.5 563.7 1307.8 561.9Z" fill="#2a1a14"/>
<path d="M1319.2 561.5C1320.8 560.1 1326.0 559.4 1329.8 559.6C1333.7 559.8 1340.5 561.1 1342.4 562.8C1344.3 564.6 1343.4 568.4 1341.2 570.0C1339.0 571.6 1332.5 572.7 1329.0 572.5C1325.5 572.2 1321.7 570.2 1320.0 568.4C1318.4 566.6 1317.6 563.0 1319.2 561.5Z" fill="#1e0e0c"/>
<path d="M1324.1 563.5C1325.2 562.9 1328.9 562.6 1331.4 562.8C1333.9 563.1 1338.0 564.1 1339.1 564.8C1340.2 565.5 1339.2 567.0 1337.8 567.2C1336.4 567.5 1332.8 566.6 1330.6 566.4C1328.4 566.2 1325.8 566.6 1324.8 566.1C1323.7 565.6 1323.0 564.0 1324.1 563.5Z" fill="#bca890"/>
<circle cx="1338.0" cy="494.7" r=".9" fill="#1a0e0c"/>
</g>
<g fill="#111"><circle cx="1216" cy="424.700" r="4.500"/><circle cx="1281.900" cy="424.800" r="4.700"/><circle cx="1345.700" cy="424.900" r="4.500"/><circle cx="1404.800" cy="425" r="4.500"/></g>
<path d="M1212 429.800l.8-2.600" stroke="#111" stroke-width="1.200"/>
<path d="M1214.300 422.600q-.8 1 .2 2.600t2.800 2.200q1 .2 1.600-.8l-1.300-.9-.6.500q-1.200-.5-1.800-1.700l.6-.6z" fill="#fff"/>
<rect x="1279.300" y="422.200" width="5.200" height="5.200" rx="1.400" fill="none" stroke="#fff" stroke-width=".8"/><circle cx="1281.900" cy="424.800" r="1.200" fill="none" stroke="#fff" stroke-width=".7"/>
<path d="M1346 429.300v-3.600h1.300l.2-1.400h-1.500v-.9q0-.7.800-.7h.8v-1.300h-1.300q-1.800 0-1.800 1.800v1.100h-1.200v1.400h1.200v3.600z" fill="#fff"/>
<g stroke="#ddd" stroke-width=".5" fill="none"><ellipse cx="1404.800" cy="425" rx="1.800" ry="4"/><path d="M1400.500 425h8.600M1401.200 423h7.200M1401.200 427h7.200"/></g>
<path d="M1212 438.600l16.800 9-4.600 2.600-3.600-2v6l-8.600 3z" fill="url(#lg)"/><path d="M1220.600 448.200l7.800 4-7.800 4z" fill="#a8a4a4"/>
</svg>
<div class="a t" style="left:1223.300px;top:423px;font-size:5.800px;font-weight:bold;color:#222;transform:scaleX(.874);transform-origin:0 0">082251404000</div>
<div class="a t" style="left:1288.400px;top:423px;font-size:5.800px;font-weight:bold;color:#222;transform:scaleX(.797);transform-origin:0 0">zamilconsulting</div>
<div class="a t" style="left:1352.600px;top:423.100px;font-size:5.800px;font-weight:bold;color:#222;transform:scaleX(.798);transform-origin:0 0">Zamil Consulting</div>
<div class="a t" style="left:1412px;top:423.100px;font-size:5.800px;font-weight:bold;color:#222;transform:scaleX(.802);transform-origin:0 0">www.zamilconsulting.com</div>
<div class="a" style="left:1209px;top:566.200px;width:106.700px;height:16.500px;background:rgba(52,52,54,.80)"></div>
<div class="a t" style="left:1212.800px;top:569px;font-size:11.750px;color:#fff">Catur Ahmat Bagio</div>
<div class="a" style="left:1333px;top:587.300px;width:17px;height:1.600px;background:#d8d8d8"></div><div class="a" style="left:1363px;top:587.300px;width:15px;height:1.600px;background:#d8d8d8"></div>
</body></html>
